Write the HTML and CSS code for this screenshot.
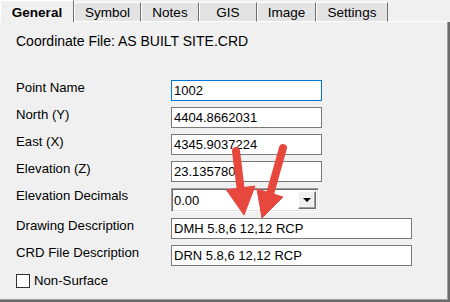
FILE: index.html
```html
<!DOCTYPE html>
<html>
<head>
<meta charset="utf-8">
<link rel="stylesheet" href="styles.css">
</head>
<body>
<div class="dialog">
  <div class="tabs">
    <div class="tab active t-general">General</div>
    <div class="tab t-symbol">Symbol</div>
    <div class="tab t-notes">Notes</div>
    <div class="tab t-gis">GIS</div>
    <div class="tab t-image">Image</div>
    <div class="tab t-settings">Settings</div>
    <div class="tab-fill"></div>
  </div>
  <div class="panel">
    <div class="coord">Coordinate File: AS BUILT SITE.CRD</div>
    <div class="form">
      <div class="row">
        <div class="label">Point Name</div>
        <div class="field focus">1002</div>
      </div>
      <div class="row">
        <div class="label">North (Y)</div>
        <div class="field">4404.8662031</div>
      </div>
      <div class="row">
        <div class="label">East (X)</div>
        <div class="field">4345.9037224</div>
      </div>
      <div class="row">
        <div class="label">Elevation (Z)</div>
        <div class="field">23.1357807</div>
      </div>
      <div class="row row-combo">
        <div class="label">Elevation Decimals</div>
        <div class="combo">
          <div class="combo-text">0.00</div>
          <div class="combo-btn"><span class="tri"></span></div>
        </div>
      </div>
      <div class="row">
        <div class="label">Drawing Description</div>
        <div class="field wide">DMH 5.8,6 12,12 RCP</div>
      </div>
      <div class="row">
        <div class="label">CRD File Description</div>
        <div class="field wide">DRN 5.8,6 12,12 RCP</div>
      </div>
      <div class="check-row">
        <span class="box"></span>
        <span class="check-label">Non-Surface</span>
      </div>
    </div>
  </div>
  <svg class="arrows" width="450" height="302" viewBox="0 0 450 302">
    <g fill="#e8473d" stroke="#e8473d">
      <line x1="236" y1="151" x2="241" y2="192" stroke-width="8" stroke-linecap="round"/>
      <polygon points="226.5,190 255,186 244,215" stroke-width="1" stroke-linejoin="round"/>
      <line x1="283" y1="148" x2="270" y2="194" stroke-width="8" stroke-linecap="round"/>
      <polygon points="257,189 283,197 262,218" stroke-width="1" stroke-linejoin="round"/>
    </g>
  </svg>
</div>
</body>
</html>
```
FILE: styles.css
```css
html, body {
  margin: 0;
  padding: 0;
  background: #f0f0f0;
}
body {
  width: 450px;
  height: 302px;
  overflow: hidden;
  font-family: "Liberation Sans", Arial, sans-serif;
  font-size: 13.2px;
  color: #000;
}
.dialog {
  position: relative;
  width: 450px;
  height: 302px;
}
.tabs {
  display: flex;
  align-items: flex-end;
  height: 22px;
}
.tab {
  box-sizing: border-box;
  height: 20px;
  background: #e3e3e3;
  border-top: 1px solid #ffffff;
  border-left: 1px solid #ffffff;
  border-right: 1px solid #6e6e6e;
  border-bottom: 1px solid #ffffff;
  text-align: center;
  line-height: 17px;
  font-size: 13.5px;
  color: #000;
  padding-top: 1px;
}
.tab.active {
  height: 22px;
  background: #f0f0f0;
  border-bottom: none;
  font-weight: bold;
  padding-top: 3px;
}
.t-general { width: 74px; }
.t-symbol { width: 67px; }
.t-notes { width: 58px; }
.t-gis { width: 58px; }
.t-image { width: 59px; }
.t-settings { width: 72px; }
.tab-fill {
  flex: 1;
  height: 1px;
  background: #ffffff;
  margin-right: 2px;
}
.panel {
  box-sizing: border-box;
  height: 280px;
  border-right: 2px solid #6b6b6b;
  border-bottom: 2px solid #6b6b6b;
  box-shadow: inset -1px -1px 0 #a0a0a0;
  padding: 11px 0 0 16px;
}
.coord {
  line-height: 16px;
  height: 16px;
  font-size: 14px;
}
.form {
  display: flex;
  flex-direction: column;
  gap: 6px;
  margin-top: 31px;
}
.row {
  display: flex;
  align-items: flex-start;
  height: 21px;
}
.row-combo {
  height: 24px;
}
.label {
  width: 155px;
  line-height: 15px;
}
.field {
  box-sizing: border-box;
  width: 151px;
  height: 21px;
  background: #ffffff;
  border: 1px solid #7a7a7a;
  padding: 1px 2px 0 2px;
  line-height: 17px;
  font-size: 13px;
  white-space: nowrap;
  overflow: hidden;
}
.field.focus {
  border-color: #0078d7;
}
.field.wide {
  width: 241px;
}
.combo {
  box-sizing: border-box;
  width: 148px;
  height: 24px;
  display: flex;
  background: #ffffff;
  border-top: 1px solid #a0a0a0;
  border-left: 1px solid #a0a0a0;
  border-right: 1px solid #ffffff;
  border-bottom: 1px solid #ffffff;
  box-shadow: inset 1px 1px 0 #696969, inset -1px -1px 0 #e3e3e3;
  padding: 2px;
  align-items: stretch;
  font-size: 13px;
}
.combo-text {
  flex: 1;
  line-height: 19px;
}
.combo-btn {
  box-sizing: border-box;
  width: 18px;
  background: #f0f0f0;
  border-top: 1px solid #ffffff;
  border-left: 1px solid #ffffff;
  border-right: 1px solid #696969;
  border-bottom: 1px solid #696969;
  box-shadow: inset -1px -1px 0 #a0a0a0;
  display: flex;
  align-items: center;
  justify-content: center;
}
.tri {
  width: 0;
  height: 0;
  border-left: 4px solid transparent;
  border-right: 4px solid transparent;
  border-top: 4px solid #000;
}
.check-row {
  display: flex;
  align-items: center;
  margin-top: 1px;
  height: 15px;
}
.box {
  box-sizing: border-box;
  width: 14px;
  height: 14px;
  border: 1px solid #333333;
  background: #ffffff;
}
.check-label {
  margin-left: 4px;
  line-height: 15px;
}
.arrows {
  position: absolute;
  left: 0;
  top: 0;
  pointer-events: none;
}
```
